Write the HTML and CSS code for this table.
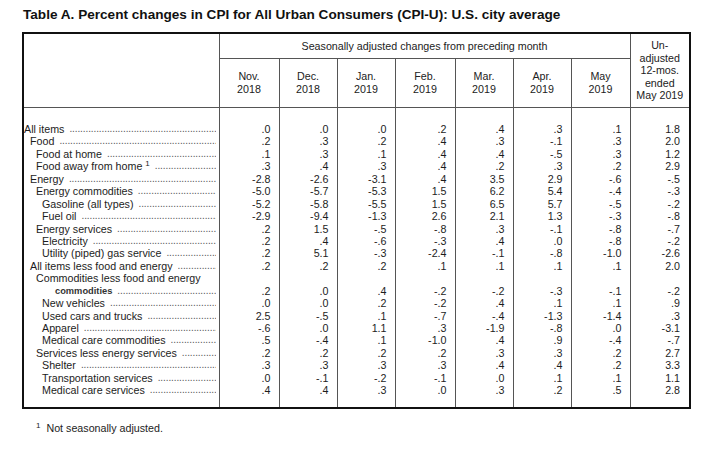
FILE: index.html
```html
<!DOCTYPE html>
<html>
<head>
<meta charset="utf-8">
<link rel="stylesheet" href="styles.css">
</head>
<body>
<div class="page">
  <h1 class="title">Table A. Percent changes in CPI for All Urban Consumers (CPI-U): U.S. city average</h1>
  <table class="cpi">
    <colgroup>
      <col class="c-label"><col class="c60"><col class="c58"><col class="c58"><col class="c60"><col class="c58"><col class="c58"><col class="c59"><col class="c60">
    </colgroup>
    <thead>
      <tr class="h1">
        <th class="blank" rowspan="2"></th>
        <th class="span" colspan="7">Seasonally adjusted changes from preceding month</th>
        <th class="unadj" rowspan="2">Un-<br>adjusted<br>12-mos.<br>ended<br>May 2019</th>
      </tr>
      <tr class="h2">
        <th>Nov.<br>2018</th>
        <th>Dec.<br>2018</th>
        <th>Jan.<br>2019</th>
        <th>Feb.<br>2019</th>
        <th>Mar.<br>2019</th>
        <th>Apr.<br>2019</th>
        <th>May<br>2019</th>
      </tr>
    </thead>
    <tbody>
      <tr class="spacer-top"><td></td><td></td><td></td><td></td><td></td><td></td><td></td><td></td><td></td></tr>
      <tr><td class="lbl l0"><div class="lead"><span>All items</span><span class="dots">..........................................................................</span></div></td><td>.0</td><td>.0</td><td>.0</td><td>.2</td><td>.4</td><td>.3</td><td>.1</td><td>1.8</td></tr>
      <tr><td class="lbl l1"><div class="lead"><span>Food</span><span class="dots">..........................................................................</span></div></td><td>.2</td><td>.3</td><td>.2</td><td>.4</td><td>.3</td><td>-.1</td><td>.3</td><td>2.0</td></tr>
      <tr><td class="lbl l2"><div class="lead"><span>Food at home</span><span class="dots">..........................................................................</span></div></td><td>.1</td><td>.3</td><td>.1</td><td>.4</td><td>.4</td><td>-.5</td><td>.3</td><td>1.2</td></tr>
      <tr><td class="lbl l2"><div class="lead"><span>Food away from home <sup>1</sup></span><span class="dots">..........................................................................</span></div></td><td>.3</td><td>.4</td><td>.3</td><td>.4</td><td>.2</td><td>.3</td><td>.2</td><td>2.9</td></tr>
      <tr><td class="lbl l1"><div class="lead"><span>Energy</span><span class="dots">..........................................................................</span></div></td><td>-2.8</td><td>-2.6</td><td>-3.1</td><td>.4</td><td>3.5</td><td>2.9</td><td>-.6</td><td>-.5</td></tr>
      <tr><td class="lbl l2"><div class="lead"><span>Energy commodities</span><span class="dots">..........................................................................</span></div></td><td>-5.0</td><td>-5.7</td><td>-5.3</td><td>1.5</td><td>6.2</td><td>5.4</td><td>-.4</td><td>-.3</td></tr>
      <tr><td class="lbl l3"><div class="lead"><span>Gasoline (all types)</span><span class="dots">..........................................................................</span></div></td><td>-5.2</td><td>-5.8</td><td>-5.5</td><td>1.5</td><td>6.5</td><td>5.7</td><td>-.5</td><td>-.2</td></tr>
      <tr><td class="lbl l3"><div class="lead"><span>Fuel oil</span><span class="dots">..........................................................................</span></div></td><td>-2.9</td><td>-9.4</td><td>-1.3</td><td>2.6</td><td>2.1</td><td>1.3</td><td>-.3</td><td>-.8</td></tr>
      <tr><td class="lbl l2"><div class="lead"><span>Energy services</span><span class="dots">..........................................................................</span></div></td><td>.2</td><td>1.5</td><td>-.5</td><td>-.8</td><td>.3</td><td>-.1</td><td>-.8</td><td>-.7</td></tr>
      <tr><td class="lbl l3"><div class="lead"><span>Electricity</span><span class="dots">..........................................................................</span></div></td><td>.2</td><td>.4</td><td>-.6</td><td>-.3</td><td>.4</td><td>.0</td><td>-.8</td><td>-.2</td></tr>
      <tr><td class="lbl l3"><div class="lead"><span>Utility (piped) gas service</span><span class="dots">..........................................................................</span></div></td><td>.2</td><td>5.1</td><td>-.3</td><td>-2.4</td><td>-.1</td><td>-.8</td><td>-1.0</td><td>-2.6</td></tr>
      <tr><td class="lbl l1"><div class="lead"><span>All items less food and energy</span><span class="dots">..........................................................................</span></div></td><td>.2</td><td>.2</td><td>.2</td><td>.1</td><td>.1</td><td>.1</td><td>.1</td><td>2.0</td></tr>
      <tr><td class="lbl l2"><div class="lead"><span>Commodities less food and energy</span></div></td><td></td><td></td><td></td><td></td><td></td><td></td><td></td><td></td></tr>
      <tr><td class="lbl l4 small"><div class="lead"><span>commodities</span><span class="dots">..........................................................................</span></div></td><td>.2</td><td>.0</td><td>.4</td><td>-.2</td><td>-.2</td><td>-.3</td><td>-.1</td><td>-.2</td></tr>
      <tr><td class="lbl l3"><div class="lead"><span>New vehicles</span><span class="dots">..........................................................................</span></div></td><td>.0</td><td>.0</td><td>.2</td><td>-.2</td><td>.4</td><td>.1</td><td>.1</td><td>.9</td></tr>
      <tr><td class="lbl l3"><div class="lead"><span>Used cars and trucks</span><span class="dots">..........................................................................</span></div></td><td>2.5</td><td>-.5</td><td>.1</td><td>-.7</td><td>-.4</td><td>-1.3</td><td>-1.4</td><td>.3</td></tr>
      <tr><td class="lbl l3"><div class="lead"><span>Apparel</span><span class="dots">..........................................................................</span></div></td><td>-.6</td><td>.0</td><td>1.1</td><td>.3</td><td>-1.9</td><td>-.8</td><td>.0</td><td>-3.1</td></tr>
      <tr><td class="lbl l3"><div class="lead"><span>Medical care commodities</span><span class="dots">..........................................................................</span></div></td><td>.5</td><td>-.4</td><td>.1</td><td>-1.0</td><td>.4</td><td>.9</td><td>-.4</td><td>-.7</td></tr>
      <tr><td class="lbl l2"><div class="lead"><span>Services less energy services</span><span class="dots">..........................................................................</span></div></td><td>.2</td><td>.2</td><td>.2</td><td>.2</td><td>.3</td><td>.3</td><td>.2</td><td>2.7</td></tr>
      <tr><td class="lbl l3"><div class="lead"><span>Shelter</span><span class="dots">..........................................................................</span></div></td><td>.3</td><td>.3</td><td>.3</td><td>.3</td><td>.4</td><td>.4</td><td>.2</td><td>3.3</td></tr>
      <tr><td class="lbl l3"><div class="lead"><span>Transportation services</span><span class="dots">..........................................................................</span></div></td><td>.0</td><td>-.1</td><td>-.2</td><td>-.1</td><td>.0</td><td>.1</td><td>.1</td><td>1.1</td></tr>
      <tr><td class="lbl l3"><div class="lead"><span>Medical care services</span><span class="dots">..........................................................................</span></div></td><td>.4</td><td>.4</td><td>.3</td><td>.0</td><td>.3</td><td>.2</td><td>.5</td><td>2.8</td></tr>
      <tr class="spacer-bottom"><td></td><td></td><td></td><td></td><td></td><td></td><td></td><td></td><td></td></tr>
    </tbody>
  </table>
  <p class="footnote"><sup>1</sup>Not seasonally adjusted.</p>
</div>
</body>
</html>
```

FILE: styles.css
```css
html, body {
  margin: 0;
  padding: 0;
  background: #ffffff;
}

.page {
  padding: 7px 0 0 22px;
  font-family: "Liberation Sans", Arial, sans-serif;
  color: #1c1c1c;
}

.title {
  margin: 0 0 9px 1px;
  font-size: 13.6px;
  line-height: 16px;
  font-weight: bold;
  color: #111;
}

.cpi {
  border-collapse: collapse;
  table-layout: fixed;
  width: 667px;
  border: 2px solid #111;
  font-size: 10.7px;
}

.c-label { width: 196px; }
.c60 { width: 60px; }
.c58 { width: 58px; }
.c59 { width: 59px; }

.cpi th {
  font-weight: normal;
  padding: 0;
  text-align: center;
  border: 1px solid #555;
  color: #222;
}

.cpi th.blank {
  border-left: none;
}

.h1 th.span {
  height: 24px;
  line-height: 13px;
  border-top: none;
}

.h2 th {
  height: 48px;
  line-height: 13px;
}

.cpi th.unadj {
  line-height: 12.6px;
  border-right: none;
  border-top: none;
}

.cpi td {
  padding: 0 8px 0 0;
  height: 12.43px;
  line-height: 12.43px;
  text-align: right;
  border-left: 1px solid #555;
  white-space: nowrap;
}

.cpi td:last-child {
  padding-right: 9px;
}

.cpi td.lbl {
  text-align: left;
  border-left: none;
  padding-right: 3px;
  overflow: hidden;
}

.spacer-top td {
  height: 15px;
}

.spacer-bottom td {
  height: 10px;
}

.lead {
  display: flex;
  align-items: flex-start;
  height: 12.43px;
  line-height: 12.43px;
  overflow: hidden;
}

.lead span:first-child {
  flex: none;
}

.dots {
  flex: 1;
  overflow: hidden;
  font-size: 10px;
  color: #555;
  margin-left: 5px;
  letter-spacing: -0.1px;
}

.l1 .lead { padding-left: 6px; }
.l2 .lead { padding-left: 12px; }
.l3 .lead { padding-left: 18px; }
.l4 .lead { padding-left: 31px; }

.small .lead span:first-child {
  font-size: 9.3px;
  font-weight: bold;
  color: #333;
}

sup {
  font-size: 8px;
  line-height: 0;
  vertical-align: 4px;
}

.footnote {
  margin: 13px 0 0 14px;
  font-size: 10.7px;
  line-height: 13px;
}

.footnote sup {
  margin-right: 6px;
}
```
